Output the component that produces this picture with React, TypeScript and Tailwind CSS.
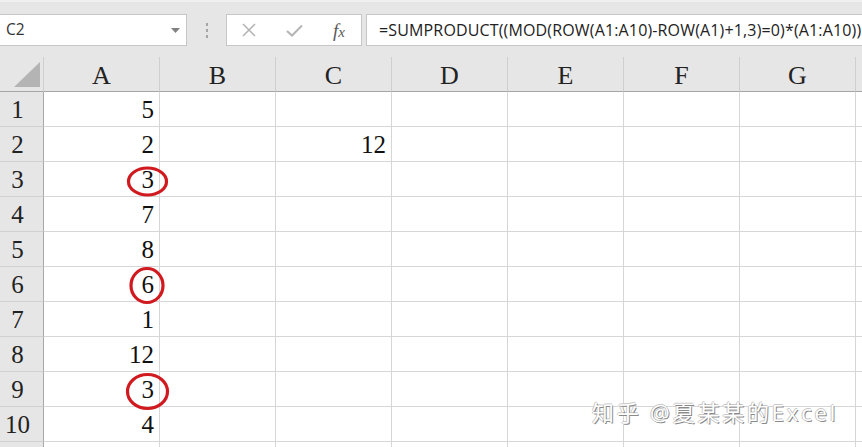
import React from "react";

const cols = ["A", "B", "C", "D", "E", "F", "G"];
const data: Record<number, Record<string, string>> = {
  1: { A: "5" },
  2: { A: "2", C: "12" },
  3: { A: "3" },
  4: { A: "7" },
  5: { A: "8" },
  6: { A: "6" },
  7: { A: "1" },
  8: { A: "12" },
  9: { A: "3" },
  10: { A: "4" },
  11: {},
};

const serif = "font-['Liberation_Serif','Noto_Serif_CJK_SC','Noto_Sans_CJK_SC',serif]";
const sans = "font-['Open_Sans','Liberation_Sans','Noto_Sans_CJK_SC',sans-serif]";

export default function App() {
  return (
    <div className="relative w-[862px] h-[447px] overflow-hidden bg-[#e6e6e6]">
      {/* Formula bar */}
      <div className="h-[57px] border-t-[2px] border-[#f0f0f0] pt-[12px] flex items-start">
        <div className={`w-[187px] h-[32px] bg-white border-y border-r border-[#c6c6c6] flex items-center justify-between pl-[6px] pr-[6px] ${sans}`}>
          <span className="text-[15.5px] text-[#333]">C2</span>
          <svg width="9" height="5" viewBox="0 0 9 5"><path d="M0 0 L9 0 L4.5 5 Z" fill="#808080" /></svg>
        </div>
        <div className="w-[39px] h-[32px] flex flex-col items-center justify-center gap-[3px]">
          <div className="w-[2px] h-[3px] bg-[#a5a5a5]" />
          <div className="w-[2px] h-[3px] bg-[#a5a5a5]" />
          <div className="w-[2px] h-[3px] bg-[#a5a5a5]" />
        </div>
        <div className="w-[136px] h-[32px] bg-white border border-[#c6c6c6] flex items-center">
          <div className="w-[44px] flex justify-center">
            <svg width="14" height="14" viewBox="0 0 14 14"><path d="M1 1 L13 13 M13 1 L1 13" stroke="#b5b5b5" strokeWidth="1.6" /></svg>
          </div>
          <div className="w-[46px] flex justify-center">
            <svg width="17" height="13" viewBox="0 0 17 13"><path d="M1 7 L6 11.5 L16 1.5" stroke="#b5b5b5" strokeWidth="2" fill="none" /></svg>
          </div>
          <div className={`w-[44px] flex justify-center italic text-[19px] text-[#5a5a5a] ${serif}`}>
            <span className="leading-none">f<span className="text-[15px]">x</span></span>
          </div>
        </div>
        <div className={`ml-[4px] flex-1 h-[32px] bg-white border-y border-l border-[#c6c6c6] flex items-center pl-[12px] ${sans}`}>
          <span className="text-[16px] text-[#222] tracking-[0.15px] whitespace-nowrap">=SUMPRODUCT((MOD(ROW(A1:A10)-ROW(A1)+1,3)=0)*(A1:A10))</span>
        </div>
      </div>

      {/* Grid */}
      <div className="grid grid-cols-[44px_repeat(7,116px)_1fr] grid-rows-[35px_repeat(11,35px)]">
        {/* header */}
        <div className="bg-[#e6e6e6] border-r border-b border-r-[#cfcfcf] border-b-[#a6a6a6] relative">
          <svg className="absolute left-[14px] top-[5px]" width="26" height="25" viewBox="0 0 26 25"><path d="M26 0 L26 25 L0 25 Z" fill="#b4b4b4" /></svg>
        </div>
        {cols.map((c) => (
          <div key={c} className={`bg-[#e6e6e6] border-r border-b border-r-[#cfcfcf] border-b-[#a6a6a6] flex items-center justify-center pt-[2px] text-[26px] text-[#222] ${serif}`}>
            {c}
          </div>
        ))}
        <div className="bg-[#e6e6e6] border-b border-b-[#a6a6a6]" />
        {Object.keys(data).map((rk) => {
          const r = Number(rk);
          return (
            <React.Fragment key={r}>
              <div className={`bg-[#e6e6e6] border-r border-b border-r-[#a9a9a9] border-b-[#d0d0d0] flex items-center justify-center pr-[8px] pt-[1px] text-[25px] text-[#222] ${serif}`}>
                {r <= 10 ? r : ""}
              </div>
              {cols.map((c) => (
                <div key={c} className={`bg-white border-r border-b border-[#d6d6d6] flex items-center justify-end pr-[5px] pt-[1px] text-[25px] text-[#111] ${serif}`}>
                  {data[r][c] ?? ""}
                </div>
              ))}
              <div className="bg-white border-b border-[#d6d6d6]" />
            </React.Fragment>
          );
        })}
      </div>

      {/* Red circles */}
      <svg className="absolute left-0 top-0 pointer-events-none" width="862" height="447">
        <ellipse cx="147.5" cy="181.5" rx="19" ry="13.5" stroke="#d11a1f" strokeWidth="3.2" fill="none" />
        <ellipse cx="147" cy="285.5" rx="16" ry="17" stroke="#d11a1f" strokeWidth="3.2" fill="none" />
        <ellipse cx="147.5" cy="391.5" rx="20" ry="17" stroke="#d11a1f" strokeWidth="3.2" fill="none" />
      </svg>

      {/* Watermark */}
      <div className={`absolute left-[592px] top-[396px] text-[22px] tracking-[2.8px] text-white whitespace-nowrap [text-shadow:1px_1px_0_#8a8a8a,-1px_0_0_#c8c8c8,0_-1px_0_#c8c8c8] ${sans}`}>
        知乎 @夏某某的Excel
      </div>
    </div>
  );
}
